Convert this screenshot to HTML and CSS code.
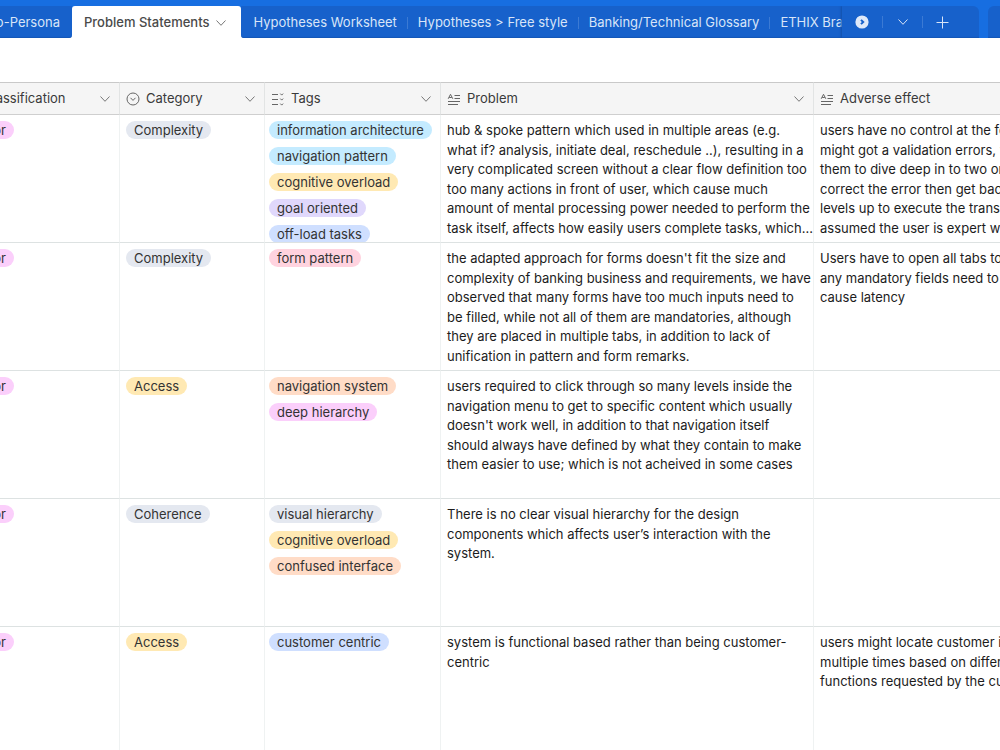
FILE: index.html
```html
<!DOCTYPE html>
<html lang="en">
<head>
<meta charset="utf-8">
<title>Problem Statements</title>
<link rel="stylesheet" href="styles.css">
</head>
<body>
<svg class="defs" aria-hidden="true">
  <symbol id="chevron" viewBox="0 0 12 12"><path d="M1.5 3.5 6 8.3l4.500-4.800" /></symbol>
  <symbol id="select" viewBox="0 0 14 14"><circle cx="7" cy="7" r="6"/><path d="M4.500 5.800 7 8.400l2.500-2.600"/></symbol>
  <symbol id="multi" viewBox="0 0 14 14"><path d="M1 2.500h6M1 7.500h6M1 12.500h6M9.300 1.600l1.400 1.500 1.400-1.500M9.300 6.600l1.400 1.500 1.400-1.500M9.300 11.600l1.400 1.500 1.400-1.500"/></symbol>
  <symbol id="longtext" viewBox="0 0 14 14"><path d="M1.200 6.800 3.500 2.300 5.800 6.800M2.200 5.500h2.600M7.500 3.500H13M7.500 6.500H13M1 9.500h12M1 12.500h10"/></symbol>
</svg>
<header class="topbar">
  <nav class="tabs" aria-label="Tables">
    <div class="group group-left"><button class="tab">Proto-Persona</button></div>
    <button class="tab active">Problem Statements <svg class="icon chevron"><use href="#chevron"/></svg></button>
    <div class="group group-main">
      <div class="strip">
        <button class="tab">Hypotheses Worksheet</button>
        <button class="tab">Hypotheses &gt; Free style</button>
        <button class="tab">Banking/Technical Glossary</button>
        <button class="tab">ETHIX Branch</button>
      </div>
      <div class="controls">
        <button class="control" aria-label="Scroll tabs"><svg class="icon round" viewBox="0 0 14 14"><circle cx="7" cy="7" r="6.600"/><path d="M6 4.900 8.200 7 6 9.100"/></svg></button>
        <button class="control" aria-label="All tables"><svg class="icon chevron"><use href="#chevron"/></svg></button>
        <button class="control" aria-label="Add table"><svg class="icon plus" viewBox="0 0 13 13"><path d="M6.500 0.500v12M0.500 6.500h12"/></svg></button>
      </div>
    </div>
    <div class="group group-right"></div>
  </nav>
</header>
<main class="grid-area">
  <table class="grid">
    <colgroup><col class="col-class"><col class="col-category"><col class="col-tags"><col class="col-text"><col class="col-text"></colgroup>
    <thead>
      <tr>
        <th><div class="head"><svg class="icon type"><use href="#select"/></svg><span>Classification</span><button class="menu" aria-label="Classification menu"><svg class="icon chevron"><use href="#chevron"/></svg></button></div></th>
        <th><div class="head"><svg class="icon type"><use href="#select"/></svg><span>Category</span><button class="menu" aria-label="Category menu"><svg class="icon chevron"><use href="#chevron"/></svg></button></div></th>
        <th><div class="head"><svg class="icon type"><use href="#multi"/></svg><span>Tags</span><button class="menu" aria-label="Tags menu"><svg class="icon chevron"><use href="#chevron"/></svg></button></div></th>
        <th><div class="head"><svg class="icon type"><use href="#longtext"/></svg><span>Problem</span><button class="menu" aria-label="Problem menu"><svg class="icon chevron"><use href="#chevron"/></svg></button></div></th>
        <th><div class="head"><svg class="icon type"><use href="#longtext"/></svg><span>Adverse effect</span></div></th>
      </tr>
    </thead>
    <tbody>
      <tr>
        <td><div class="cell pills"><span class="pill pink">Major</span></div></td>
        <td><div class="cell pills"><span class="pill gray">Complexity</span></div></td>
        <td><div class="cell pills tags"><span class="pill cyan">information architecture</span><span class="pill cyan">navigation pattern</span><span class="pill yellow">cognitive overload</span><span class="pill purple">goal oriented</span><span class="pill blue">off-load tasks</span></div></td>
        <td><div class="cell text">hub &amp; spoke pattern which used in multiple areas (e.g.
what if? analysis, initiate deal, reschedule ..), resulting in a
very complicated screen without a clear flow definition too
too many actions in front of user, which cause much
amount of mental processing power needed to perform the
task itself, affects how easily users complete tasks, which...</div></td>
        <td><div class="cell text">users have no control at the form
might got a validation errors, which
them to dive deep in to two or
correct the error then get back
levels up to execute the transaction
assumed the user is expert with</div></td>
      </tr>
      <tr>
        <td><div class="cell pills"><span class="pill pink">Major</span></div></td>
        <td><div class="cell pills"><span class="pill gray">Complexity</span></div></td>
        <td><div class="cell pills tags"><span class="pill rose">form pattern</span></div></td>
        <td><div class="cell text">the adapted approach for forms doesn't fit the size and
complexity of banking business and requirements, we have
observed that many forms have too much inputs need to
be filled, while not all of them are mandatories, although
they are placed in multiple tabs, in addition to lack of
unification in pattern and form remarks.</div></td>
        <td><div class="cell text">Users have to open all tabs to
any mandatory fields need to be
cause latency</div></td>
      </tr>
      <tr>
        <td><div class="cell pills"><span class="pill pink">Major</span></div></td>
        <td><div class="cell pills"><span class="pill yellow">Access</span></div></td>
        <td><div class="cell pills tags"><span class="pill orange">navigation system</span><span class="pill pink">deep hierarchy</span></div></td>
        <td><div class="cell text">users required to click through so many levels inside the
navigation menu to get to specific content which usually
doesn't work well, in addition to that navigation itself
should always have defined by what they contain to make
them easier to use; which is not acheived in some cases</div></td>
        <td><div class="cell"></div></td>
      </tr>
      <tr>
        <td><div class="cell pills"><span class="pill pink">Major</span></div></td>
        <td><div class="cell pills"><span class="pill gray">Coherence</span></div></td>
        <td><div class="cell pills tags"><span class="pill gray">visual hierarchy</span><span class="pill yellow">cognitive overload</span><span class="pill orange">confused interface</span></div></td>
        <td><div class="cell text">There is no clear visual hierarchy for the design
components which affects user’s interaction with the
system.</div></td>
        <td><div class="cell"></div></td>
      </tr>
      <tr>
        <td><div class="cell pills"><span class="pill pink">Major</span></div></td>
        <td><div class="cell pills"><span class="pill yellow">Access</span></div></td>
        <td><div class="cell pills tags"><span class="pill blue">customer centric</span></div></td>
        <td><div class="cell text">system is functional based rather than being customer-
centric</div></td>
        <td><div class="cell text">users might locate customer in
multiple times based on different
functions requested by the customer</div></td>
      </tr>
    </tbody>
  </table>
</main>
</body>
</html>
```

FILE: styles.css
```css
* { box-sizing: border-box; }

body {
  display: flex;
  flex-direction: column;
  height: 100vh;
  margin: 0;
  overflow: hidden;
  background: #fff;
  color: #1c1c1c;
  font: 13px/1.5 Inter, "Liberation Sans", sans-serif;
}

button {
  padding: 0;
  border: 0;
  background: none;
  color: inherit;
  font: inherit;
}

.defs { display: none; }

.icon {
  flex: none;
  fill: none;
  stroke: currentColor;
}

.chevron { width: 12px; height: 12px; }

/* Table tabs */
.topbar {
  flex: none;
  padding-top: 6px;
  background: linear-gradient(#fff, #fff) 0 100% / 50% 4px no-repeat #176ee1;
}

.tabs {
  display: flex;
  height: 32px;
  color: #d9e5f8;
}

.group {
  display: flex;
  background: #1761cb;
  box-shadow: inset 0 -2px 1px -1px #1557b6;
}

.group-left {
  flex: none;
  justify-content: flex-end;
  width: 72px;
  overflow: hidden;
  border-bottom-right-radius: 3px;
}

.group-main {
  flex: 1;
  min-width: 0;
  overflow: hidden;
  border-radius: 0 6px 0 3px;
}

.group-right {
  flex: none;
  width: 12px;
  margin-left: 9px;
  border-top-left-radius: 6px;
}

.tab {
  display: flex;
  flex: none;
  align-items: center;
  padding: 1px 12px 0;
  white-space: nowrap;
}

.tab.active {
  gap: 6px;
  padding-right: 14px;
  border-radius: 3px 3px 0 0;
  background: #fff;
  color: #4a4a4a;
  font-weight: 500;
}

.tab.active .chevron { color: #777; }

.strip {
  display: flex;
  flex: 1;
  min-width: 0;
  overflow: hidden;
}

.strip .tab + .tab::before,
.control + .control::before {
  width: 1px;
  height: 12px;
  background: #3b7ad4;
  content: "";
}

.strip .tab { padding-right: 10px; }
.strip .tab + .tab { padding-left: 0; }
.strip .tab + .tab::before { margin-right: 10px; }

.controls {
  display: flex;
  flex: none;
  width: 137px;
  box-shadow: -1px 0 2px #1350a8;
}

.control {
  display: flex;
  align-items: center;
  width: 40px;
}

.control .icon { margin: 0 auto; }
.round { width: 14px; height: 14px; }
.round circle { fill: #dfe9f9; stroke: none; }
.round path { stroke: #1761cb; stroke-width: 2; }
.plus { width: 13px; height: 13px; }

/* Records */
.grid-area {
  flex: 1;
  min-height: 0;
  margin-top: 44px;
  overflow: hidden;
}

.grid {
  width: 1230px;
  margin-left: -43px;
  border-spacing: 0;
  table-layout: fixed;
}

.col-class { width: 163px; }
.col-category { width: 145px; }
.col-tags { width: 176px; }
.col-text { width: 373px; }

th, td {
  padding: 0;
  border-right: 1px solid #eff2f2;
  border-bottom: 1px solid #dde2e2;
  text-align: left;
  vertical-align: top;
}

th {
  border-top: 1px solid #c9c9c9;
  border-right-color: #e2e4e4;
  border-bottom-color: #cfcfcf;
  background: #f5f5f5;
  color: #3a3a3a;
  font-weight: 400;
}

.head {
  display: flex;
  align-items: center;
  height: 31px;
  padding: 1px 8px 0 6px;
}

.type {
  width: 14px;
  height: 14px;
  margin-right: 6px;
  color: #666;
}

.menu {
  display: flex;
  margin-left: auto;
  color: #777;
}

.cell {
  height: 127px;
  padding: 6px;
  overflow: hidden;
}

.text {
  padding-right: 0;
  white-space: pre;
}

.pills {
  display: flex;
  flex-direction: column;
  align-items: flex-start;
  gap: 8px;
}

.tags { padding-left: 4px; }

.pill {
  flex: none;
  height: 18px;
  padding: 0 8px;
  border-radius: 9px;
  color: #333;
  line-height: 18px;
  white-space: nowrap;
}

.pink { background: #fbcffb; }
.gray { background: #e4e8f0; }
.cyan { background: #c4ebff; }
.yellow { background: #ffe9b3; }
.purple { background: #e0d8fc; }
.blue { background: #cfdfff; }
.rose { background: #ffd3df; }
.orange { background: #ffdcc7; }
```
